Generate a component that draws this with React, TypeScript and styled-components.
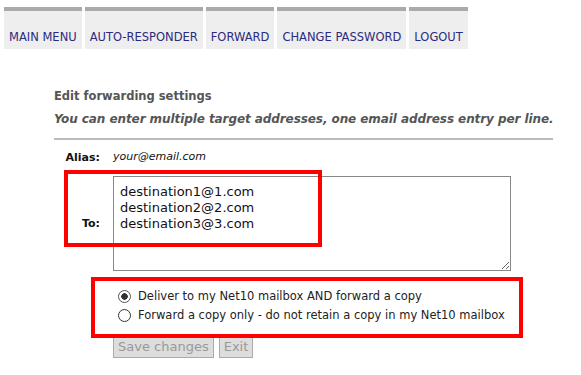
import * as React from "react";
import styled, { createGlobalStyle } from "styled-components";

const Global = createGlobalStyle`
  html, body {
    margin: 0;
    padding: 0;
    background: #fff;
  }
  body {
    font-family: "DejaVu Sans", Verdana, sans-serif;
    width: 581px;
    height: 375px;
    overflow: hidden;
  }
`;

const Page = styled.div`
  position: relative;
  width: 581px;
  height: 375px;
`;

const Nav = styled.nav`
  display: flex;
  gap: 3px;
  padding: 7px 0 0 4px;
`;

const Tab = styled.a`
  display: flex;
  align-items: flex-end;
  box-sizing: border-box;
  height: 42px;
  padding: 0 5px 5px;
  border-top: 4px solid #aaa;
  background: #eee;
  color: #2b2b7e;
  font-size: 11.5px;
  text-decoration: none;
  white-space: nowrap;
`;

const Content = styled.div`
  margin: 0 0 0 54px;
  width: 499px;
`;

const Heading = styled.h3`
  margin: 39px 0 0;
  font-size: 11.5px;
  font-weight: bold;
  color: #555;
  line-height: 16px;
`;

const Hint = styled.p`
  margin: 6px 0 0;
  font-size: 12px;
  letter-spacing: -0.08px;
  font-weight: bold;
  font-style: italic;
  color: #555;
  line-height: 18px;
  white-space: nowrap;
`;

const Rule = styled.hr`
  margin: 10px 0 0;
  border: 0;
  border-top: 2px solid #bbb;
`;

const Form = styled.form`
  display: grid;
  grid-template-columns: 46px 1fr;
  column-gap: 13px;
  margin-top: 9px;
  font-size: 11px;
  color: #111;
`;

const Label = styled.label<{ $top?: number }>`
  display: flex;
  align-items: center;
  justify-content: flex-end;
  padding-top: ${(p) => p.$top ?? 0}px;
  font-weight: bold;
  font-size: 11px;
`;

const Value = styled.div<{ $italic?: boolean }>`
  font-style: ${(p) => (p.$italic ? "italic" : "normal")};
  font-size: 11px;
  line-height: 16px;
`;

const Area = styled.textarea`
  display: block;
  box-sizing: border-box;
  width: 398px;
  height: 95px;
  margin-top: 11px;
  padding: 7px 6px 3px;
  border: 1px solid #888;
  font-family: "DejaVu Sans", Verdana, sans-serif;
  font-size: 13px;
  line-height: 16px;
  color: #111;
  resize: both;
  outline: none;
`;

const Options = styled.div`
  display: flex;
  flex-direction: column;
  gap: 3px;
  margin-top: 17px;
`;

const Option = styled.label`
  display: flex;
  align-items: center;
  font-size: 11.5px;
  color: #222;
  line-height: 16px;
`;

const Radio = styled.input`
  appearance: none;
  box-sizing: border-box;
  width: 13px;
  height: 13px;
  margin: 0 7px 0 5px;
  border: 1px solid #333;
  border-radius: 50%;
  background: #fff;
  &:checked {
    background: radial-gradient(circle, #333 0 3px, #fff 3.5px);
    border-color: #555;
  }
`;

const Buttons = styled.div`
  display: flex;
  align-items: flex-start;
  gap: 5px;
  margin-top: 12px;
`;

const Button = styled.button`
  box-sizing: border-box;
  height: 23px;
  padding: 0 4px;
  border: 1px solid #aaa;
  background: #ddd;
  color: #999;
  font-family: "DejaVu Sans", Verdana, sans-serif;
  font-size: 13px;
  line-height: 21px;
`;

const Marker = styled.div<{ $x: number; $y: number; $w: number; $h: number }>`
  position: absolute;
  left: ${(p) => p.$x}px;
  top: ${(p) => p.$y}px;
  width: ${(p) => p.$w}px;
  height: ${(p) => p.$h}px;
  box-sizing: border-box;
  border: 4px solid #f00;
  pointer-events: none;
`;

const tabs = ["MAIN MENU", "AUTO-RESPONDER", "FORWARD", "CHANGE PASSWORD", "LOGOUT"];

export default function App() {
  return (
    <Page>
      <Global />
      <Nav>
        {tabs.map((t) => (
          <Tab key={t} href="#">
            {t}
          </Tab>
        ))}
      </Nav>
      <Content>
        <Heading>Edit forwarding settings</Heading>
        <Hint>You can enter multiple target addresses, one email address entry per line.</Hint>
        <Rule />
        <Form>
          <Label>Alias:</Label>
          <Value $italic>your@email.com</Value>
          <Label $top={11}>To:</Label>
          <Area
            defaultValue={"destination1@1.com\ndestination2@2.com\ndestination3@3.com"}
          />
          <span />
          <Options>
            <Option>
              <Radio type="radio" name="mode" defaultChecked />
              Deliver to my Net10 mailbox AND forward a copy
            </Option>
            <Option>
              <Radio type="radio" name="mode" />
              Forward a copy only - do not retain a copy in my Net10 mailbox
            </Option>
          </Options>
          <span />
          <Buttons>
            <Button type="button" disabled>
              Save changes
            </Button>
            <Button type="button" disabled>
              Exit
            </Button>
          </Buttons>
        </Form>
      </Content>
      <Marker $x={64} $y={170} $w={258} $h={77} />
      <Marker $x={91} $y={277} $w={432} $h={61} />
    </Page>
  );
}
